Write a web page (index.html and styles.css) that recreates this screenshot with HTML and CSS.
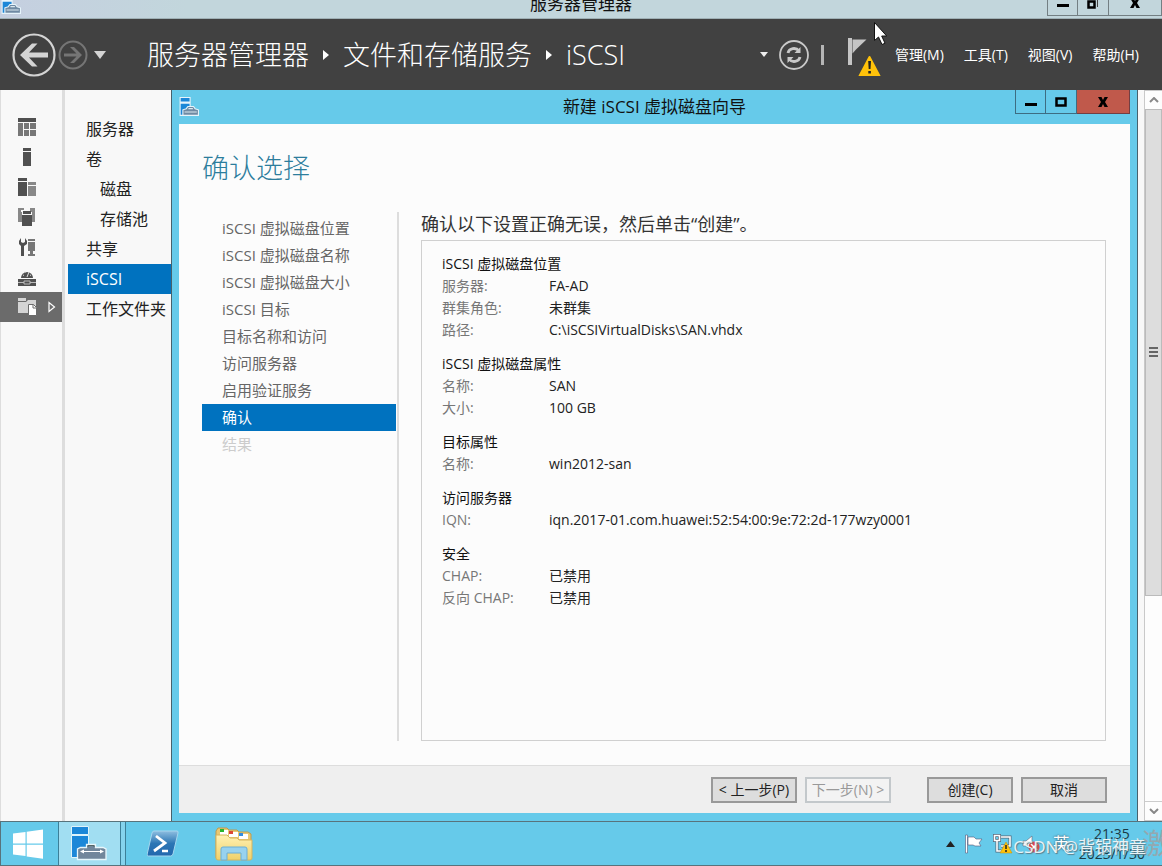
FILE: index.html
```html
<!DOCTYPE html>
<html lang="zh-CN">
<head>
<meta charset="utf-8">
<meta name="viewport" content="width=device-width, initial-scale=1">
<title>服务器管理器</title>
<link rel="stylesheet" href="styles.css">
</head>
<body>
<svg class="defs" aria-hidden="true">
  <symbol id="server-app" viewBox="0 0 18 18">
    <path d="M1 .5h9v4H1z M1 5.500h9v11H1z" fill="#1c87d8" stroke="#e6f4fb"/>
    <path d="M3.500 16.500v-5l3-1 1.500-2h5l1.500 2 3 1v5z" fill="#6f8aa3" stroke="#e6f4fb"/>
    <path d="M8.500 10.500h4M5 13.500h11" stroke="#dbe8f0" fill="none"/>
  </symbol>
</svg>

<header class="titlebar">
  <svg class="app-icon titlebar-icon" aria-hidden="true"><use href="#server-app"/></svg>
  <span class="titlebar-text">服务器管理器</span>
  <div class="window-buttons main-buttons">
    <button aria-label="最小化"><svg width="12" height="12" viewBox="0 0 12 12"><path d="M0 4h12v3H0z"/></svg></button>
    <button aria-label="还原"><svg width="12" height="12" viewBox="0 0 12 12"><path d="M1.500 1.500h6v6h-6z" fill="none" stroke="#000" stroke-width="2.500"/><path d="M10.500 0v7" fill="none" stroke="#444"/></svg></button>
    <button class="wide" aria-label="关闭"><svg width="12" height="12" viewBox="0 0 12 12"><path d="M1-2h3.500L6 1l1.500-3H11L8 3l3 5H7.500L6 5 4.500 8H1l3-5z"/></svg></button>
  </div>
</header>

<div class="ribbon">
  <button class="icon-button" aria-label="后退"><svg width="44" height="44" viewBox="0 0 44 44"><circle cx="22" cy="22" r="20.500" fill="none" stroke="#d4d4d4" stroke-width="2.200"/><path d="M8 22L20 10.500h5.500L17 19.500h19v5H17l8.500 9H20z" fill="#d4d4d4"/></svg></button>
  <button class="icon-button" aria-label="前进" ><svg width="30" height="30" viewBox="0 0 30 30"><circle cx="15" cy="15" r="13.500" fill="none" stroke="#757575" stroke-width="2"/><path d="M24 15l-8 8h-4l6.500-6.500H6v-3h12.500L12 7h4z" fill="#757575"/></svg></button>
  <button class="icon-button history" aria-label="历史记录"><svg width="12" height="8" viewBox="0 0 12 8"><path d="M0 0h12L6 8z" fill="#d4d4d4"/></svg></button>
  <nav class="breadcrumb" aria-label="路径">
    <a href="#">服务器管理器</a>
    <svg width="6" height="10" viewBox="0 0 6 10" aria-hidden="true"><path d="M0 0l6 5-6 5z" fill="#fff"/></svg>
    <a href="#">文件和存储服务</a>
    <svg width="6" height="10" viewBox="0 0 6 10" aria-hidden="true"><path d="M0 0l6 5-6 5z" fill="#fff"/></svg>
    <a href="#">iSCSI</a>
  </nav>
  <div class="ribbon-tools">
    <button class="icon-button" aria-label="展开"><svg width="8" height="5" viewBox="0 0 8 5"><path d="M0 0h8L4 5z" fill="#eee"/></svg></button>
    <button class="icon-button refresh" aria-label="刷新"><svg width="32" height="32" viewBox="0 0 32 32" fill="none" stroke="#c9c9c9"><circle cx="16" cy="16" r="14" stroke-width="1.800"/><path d="M10 14c1-5 8-6 11-2M22 18c-1 5-8 6-11 2" stroke-width="2.800"/><path d="M22.500 8v6h-6zM9.500 24v-6h6z" fill="#c9c9c9" stroke="none"/></svg></button>
    <span class="divider"></span>
    <button class="icon-button flag" aria-label="通知"><svg width="36" height="42" viewBox="0 0 36 42"><path d="M1 4h4v27H1z" fill="#c5c5c5"/><path d="M5.500 5.500h14L9 15.500l-3.500 4z" fill="#c5c5c5"/><path d="M22.500 23L32.500 42h-20z" fill="#ffc20a" stroke="#ffc20a" stroke-width="2" stroke-linejoin="round"/><path d="M21.200 27h2.800l-.5 8h-1.800zM21.300 37h2.600v2.600h-2.600z" fill="#222"/></svg></button>
    <div class="menus">
      <button>管理(M)</button><button>工具(T)</button><button>视图(V)</button><button>帮助(H)</button>
    </div>
  </div>
  <svg class="cursor" width="15" height="25" viewBox="0 0 15 25" aria-hidden="true"><path d="M1.500 1.500v18l4-3.500 3.500 7.500 3-1.300-3.300-7.200h5z" fill="#fff" stroke="#111"/></svg>
</div>

<main class="workspace">
  <nav class="rail" aria-label="角色">
    <a href="#" aria-label="仪表板"><svg width="18" height="18" viewBox="0 0 18 18"><path d="M0 0h18v4H0z" fill="#505050"/><path d="M0 5h5v13H0zM6 5h5v6H6zM12 5h6v6h-6zM6 12h5v6H6zM12 12h6v6h-6z" fill="#777"/></svg></a>
    <a href="#" aria-label="本地服务器"><svg width="18" height="18" viewBox="0 0 18 18"><path d="M5 0h8v3H5zM5 4h8v14H5z" fill="#505050"/></svg></a>
    <a href="#" aria-label="所有服务器"><svg width="18" height="18" viewBox="0 0 18 18"><path d="M0 0h9v3H0zM0 4h9v14H0z" fill="#505050"/><path d="M10 4h8v3h-8zM10 8h8v10h-8z" fill="#888"/></svg></a>
    <a href="#" aria-label="服务器组"><svg width="18" height="18" viewBox="0 0 18 18"><path d="M0 0h6v2H3v2h1v10H0zM12 0h5v14h-3V4h-2z" fill="#888"/><path d="M5 3h8v3H5zM4 7h10v11H4z" fill="#505050"/></svg></a>
    <a href="#" aria-label="配置"><svg width="18" height="18" viewBox="0 0 18 18"><path d="M3 0v4l2 1 2-1V0l2 3v3L6 8v10H3V8L1 6V3z" fill="#505050"/><path d="M10 1h7v2h-7zM10 4h7v9h-7zM12 13h3v3h2v2h-7v-2h2z" fill="#777"/></svg></a>
    <a href="#" aria-label="存储"><svg width="18" height="18" viewBox="0 0 18 18"><path d="M3 10a6 6 0 1 1 12 0z" fill="#505050"/><path d="M5 7l1 .5M7 3.500l.7 1M11 4L9 9M13 7l-1 .5" stroke="#ddd"/><path d="M0 11h18v7H0z" fill="#505050"/><path d="M0 14.500h6M12 14.500h6M6 13h6v3H6z" stroke="#bbb" fill="none"/></svg></a>
    <a href="#" class="active" aria-label="文件和存储服务"><svg width="20" height="18" viewBox="0 0 20 18"><path d="M0 0h8v3H0zM0 4h8l2-2h8v13H0z" fill="#d4d4d4"/><path d="M10.500 6.500h5l3 3v8h-8z" fill="#fff" stroke="#6b6b6b"/><path d="M15 6.500v3.500h3.500" fill="none" stroke="#6b6b6b"/></svg><svg class="expand" width="8" height="12" viewBox="0 0 8 12"><path d="M1 1.500v9L6.500 6z" fill="none" stroke="#fff" stroke-width="1.200"/></svg></a>
  </nav>
  <nav class="sections" aria-label="文件和存储服务">
    <a href="#">服务器</a><a href="#">卷</a><a href="#" class="sub">磁盘</a><a href="#" class="sub">存储池</a><a href="#">共享</a><a href="#" class="active">iSCSI</a><a href="#">工作文件夹</a>
  </nav>

  <section class="dialog" role="dialog" aria-labelledby="dialog-title">
    <div class="dialog-bar">
      <svg class="app-icon" aria-hidden="true"><use href="#server-app"/></svg>
      <h1 id="dialog-title">新建 iSCSI 虚拟磁盘向导</h1>
      <div class="window-buttons dialog-buttons">
        <button aria-label="最小化"><svg width="12" height="12" viewBox="0 0 12 12"><path d="M0 7h12v3H0z"/></svg></button>
        <button aria-label="最大化"><svg width="12" height="12" viewBox="0 0 12 12"><path d="M1.500 2.500h9v7h-9z" fill="none" stroke="#000" stroke-width="2.500"/></svg></button>
        <button class="wide close" aria-label="关闭"><svg width="12" height="12" viewBox="0 0 12 12"><path d="M1 1h3.500L6 4l1.500-3H11L8 6l3 5H7.500L6 8l-1.500 3H1l3-5z"/></svg></button>
      </div>
    </div>
    <div class="dialog-body">
      <h2>确认选择</h2>
      <div class="wizard">
        <ol class="steps">
          <li>iSCSI 虚拟磁盘位置</li><li>iSCSI 虚拟磁盘名称</li><li>iSCSI 虚拟磁盘大小</li><li>iSCSI 目标</li><li>目标名称和访问</li><li>访问服务器</li><li>启用验证服务</li><li class="current" aria-current="step">确认</li><li class="disabled">结果</li>
        </ol>
        <div class="confirm">
          <p class="intro">确认以下设置正确无误，然后单击“创建”。</p>
          <div class="summary">
            <section><h3>iSCSI 虚拟磁盘位置</h3><dl><dt>服务器:</dt><dd>FA-AD</dd><dt>群集角色:</dt><dd>未群集</dd><dt>路径:</dt><dd>C:\iSCSIVirtualDisks\SAN.vhdx</dd></dl></section>
            <section><h3>iSCSI 虚拟磁盘属性</h3><dl><dt>名称:</dt><dd>SAN</dd><dt>大小:</dt><dd>100 GB</dd></dl></section>
            <section><h3>目标属性</h3><dl><dt>名称:</dt><dd>win2012-san</dd></dl></section>
            <section><h3>访问服务器</h3><dl><dt>IQN:</dt><dd>iqn.2017-01.com.huawei:52:54:00:9e:72:2d-177wzy0001</dd></dl></section>
            <section><h3>安全</h3><dl><dt>CHAP:</dt><dd>已禁用</dd><dt>反向 CHAP:</dt><dd>已禁用</dd></dl></section>
          </div>
        </div>
      </div>
    </div>
    <footer class="dialog-footer">
      <div class="button-pair"><button>&lt; 上一步(P)</button><button disabled>下一步(N) &gt;</button></div>
      <div class="button-pair"><button>创建(C)</button><button>取消</button></div>
    </footer>
  </section>

  <div class="scrollbar" aria-hidden="true">
    <div class="scroll-arrow"><svg width="10" height="6" viewBox="0 0 10 6"><path d="M1 5l4-4 4 4" fill="none" stroke="#888" stroke-width="2"/></svg></div>
    <div class="scroll-thumb"><svg width="9" height="10" viewBox="0 0 9 10"><path d="M0 1h9M0 5h9M0 9h9" stroke="#666" stroke-width="2"/></svg></div>
    <div class="scroll-track"></div>
    <div class="scroll-arrow"><svg width="10" height="6" viewBox="0 0 10 6"><path d="M1 1l4 4 4-4" fill="none" stroke="#888" stroke-width="2"/></svg></div>
  </div>
</main>

<footer class="taskbar">
  <button class="start" aria-label="开始"><svg width="32" height="30" viewBox="0 0 32 30"><path d="M1 4.500L13.500 3v11.500H1zM14.700 2.800L31 .5v14H14.700zM1 15.700h12.500V27L1 25.500zM14.700 15.700H31v14l-16.300-2.300z" fill="#fff"/></svg></button>
  <button class="task running" aria-label="服务器管理器"><svg width="38" height="37" viewBox="0 0 38 37"><path d="M1.500 1.500h17v8h-17zM1.500 10.500h17v22h-17z" fill="#1c87d8" stroke="#dff3fb"/><path d="M7.500 34.500V24l3-1.500h6v-3h9v3h7.500l3 1.500v10.500z" fill="#71869b" stroke="#e8f6fb" stroke-width="1.300"/><path d="M18 22v-1.500h6V22" fill="none" stroke="#566"/><path d="M11 26.500h22" fill="none" stroke="#fff"/><path d="M10 26.500l4-2v4zM34 26.500l-4-2v4z" fill="#fff"/></svg></button>
  <button class="task" aria-label="PowerShell"><svg width="32" height="27" viewBox="0 0 32 27"><defs><linearGradient id="ps" x2="0" y2="1"><stop stop-color="#8ebee0"/><stop offset=".5" stop-color="#2c76b4"/><stop offset="1" stop-color="#2268ae"/></linearGradient></defs><path d="M7 1h23q1.500 0 1 2l-5 21q-.5 2-2.500 2h-22q-2 0-1.300-2L5 3q.5-2 2-2z" fill="url(#ps)" stroke="#a6d6ee"/><path d="M9 6l9 7-11 8" fill="none" stroke="#fff" stroke-width="2.800"/><path d="M15 21h6" stroke="#fff" stroke-width="2.500"/></svg></button>
  <button class="task" aria-label="文件资源管理器"><svg width="38" height="34" viewBox="0 0 38 34"><defs><linearGradient id="fo" x2="0" y2="1"><stop stop-color="#fff1b3"/><stop offset="1" stop-color="#efd16a"/></linearGradient></defs><path d="M1 4l2-3h9l2 2h8l2 2h9l3 2v24H1z" fill="#e8c873" stroke="#bd9b4f"/><path d="M5 3h8v5H5zM14 5h9v5h-9zM24 7h9v5h-9z" fill="#fff"/><path d="M5 2h4v3H5z" fill="#27b62d"/><path d="M14 4h4v3h-4z" fill="#db4637"/><path d="M24 6h4v3h-4z" fill="#318de0"/><path d="M1 8h11l3 3h7l2 2h13v18q0 2-2 2H3q-2 0-2-2z" fill="url(#fo)" stroke="#d6b45e"/><path d="M6 33V22q0-2 2-2h22q2 0 2 2v11h-6v-7H12v7z" fill="#97d2ef" stroke="#6aaed5"/></svg></button>
  <div class="tray">
    <svg width="9" height="6" viewBox="0 0 9 6"><path d="M0 6l4.500-6L9 6z" fill="#222"/></svg>
    <svg width="20" height="20" viewBox="0 0 20 20"><path d="M1.500 1h2v18h-2zM4 3h6l2 2h6l-3 4 2 3h-6l-2-1H4z" fill="#fff" stroke="#557" stroke-width=".6"/></svg>
    <svg width="20" height="20" viewBox="0 0 20 20"><path d="M7 3h10v9H8" fill="none" stroke="#567" stroke-width="3"/><path d="M7 3h10v9H8" fill="none" stroke="#fff" stroke-width="1.600"/><path d="M1.500 1.500h5v5h-5zM4 7v10h4" fill="none" stroke="#567" stroke-width="3"/><path d="M1.500 1.500h5v5h-5zM4 7v10h4" fill="none" stroke="#fff" stroke-width="1.600"/><path d="M13 8l6 11H7z" fill="#ffc20a" stroke="#c68c00" stroke-width=".5"/><path d="M13 11v4M13 16v2" stroke="#222" stroke-width="1.500"/></svg>
    <svg width="20" height="20" viewBox="0 0 20 20"><path d="M1 7h3l6-5v15l-6-5H1z" fill="#fff" stroke="#667" stroke-width=".6"/><circle cx="12" cy="13" r="5.500" fill="#e14646"/><path d="M9 10l6 6M15 10l-6 6" stroke="#fff" stroke-width="1.500"/></svg>
    <span class="ime">英</span>
    <div class="clock"><time>21:35</time><time>2023/1/30</time></div>
  </div>
  <span class="activate">激</span>
  <span class="watermark">CSDN @背锅神童</span>
</footer>
</body>
</html>
```

FILE: styles.css
```css
* { box-sizing: border-box; }

body {
  margin: 0;
  min-height: 100vh;
  display: flex;
  flex-direction: column;
  overflow: hidden;
  background: #f8f8f8;
  color: #222;
  font: 14px/22px "Open Sans", "Noto Sans CJK SC", sans-serif;
}

a { color: inherit; text-decoration: none; }
button { font: inherit; color: inherit; border: 0; padding: 0; background: none; }
svg { display: block; flex: none; }
h1, h2, h3, p, ol, dl, dd { margin: 0; padding: 0; font-weight: 400; }
.defs { position: absolute; width: 0; height: 0; }
.app-icon { width: 20px; height: 20px; }

/* Main window title */
.titlebar {
  height: 19px;
  display: grid;
  grid-template-columns: 1fr auto 1fr;
  grid-template-rows: 18px;
  align-items: end;
  background: linear-gradient(90deg, #c5cfe0, #c2d6dc 16%);
  border-bottom: 1px solid #9fb0b5;
  overflow: hidden;
}
.titlebar-icon { align-self: end; margin: 0 0 3px 1px; }
.titlebar-text { font-size: 17px; line-height: 24px; padding-bottom: 2px; color: #111; }
.window-buttons { display: flex; justify-self: end; align-self: start; }
.window-buttons button {
  width: 31px;
  height: 24px;
  display: grid;
  place-items: center;
  border: 1px solid #3d6d82;
  border-top: 0;
}
.window-buttons button + button { border-left: 0; }
.window-buttons .wide { width: 53px; }
.main-buttons button { height: 16px; align-items: start; border-color: #737f83; }
.window-buttons .close { background: #c0594b; border-color: #733e42; }

/* Navigation band */
.ribbon {
  position: relative;
  height: 71px;
  display: flex;
  align-items: center;
  padding: 0 23px 0 12px;
  background: #414141;
  color: #fff;
}
.icon-button { display: grid; place-items: center; }
.ribbon > .icon-button + .icon-button { margin-left: 2px; }
.ribbon > .history { padding-left: 4px; }
.breadcrumb {
  display: flex;
  align-items: center;
  gap: 14px;
  margin-left: 41px;
  font-size: 27px;
  line-height: 40px;
  font-weight: 300;
  white-space: nowrap;
}
.ribbon-tools { display: flex; align-items: center; margin-left: auto; }
.refresh { margin-left: 10px; }
.divider { width: 3px; height: 20px; margin: 0 23px 0 11px; background: #b5b5b5; }
.menus { display: flex; gap: 20px; margin-left: 12px; white-space: nowrap; }
.cursor { position: absolute; left: 873px; top: 2px; }

/* Workspace columns */
.workspace { flex: 1; display: flex; min-height: 0; }
.rail {
  width: 62px;
  padding-top: 22px;
  border-left: 1px solid #ddd;
}
.rail a { height: 30px; display: flex; align-items: center; padding-left: 17px; }
.rail .active { margin-left: -1px; padding-left: 18px; background: #6b6b6b; }
.expand { margin-left: 10px; }
.sections {
  width: 109px;
  padding: 24px 0 0 3px;
  border-left: 3px solid #ddd;
  font-size: 16px;
  white-space: nowrap;
}
.sections a { height: 30px; display: flex; align-items: center; padding-left: 18px; }
.sections .sub { padding-left: 32px; }
.sections .active { background: #0072bf; color: #fff; }

/* Wizard dialog */
.dialog {
  flex: 1;
  display: flex;
  flex-direction: column;
  padding: 0 7px 8px;
  background: #66caea;
  border: 1px solid #47616c;
  border-width: 0 1px 0 1px;
}
.dialog-bar {
  height: 34px;
  display: grid;
  grid-template-columns: 1fr auto 1fr;
  align-items: center;
}
.dialog-bar h1 { font-size: 17px; line-height: 32px; color: #111; }
.dialog-body {
  flex: 1;
  display: flex;
  flex-direction: column;
  padding: 22px 24px 24px 23px;
  background: #fcfcfc;
}
.dialog-body h2 { font-size: 27px; line-height: 44px; color: #2c7d9c; font-weight: 300; }
.wizard { flex: 1; display: flex; margin-top: 22px; }
.steps {
  width: 197px;
  padding-top: 3px;
  list-style: none;
  border-right: 2px solid #ddd;
  font-size: 15px;
  line-height: 27px;
  color: #666;
}
.steps li { height: 27px; padding-left: 20px; }
.steps .current { background: #0072bf; color: #fff; margin-right: 1px; }
.steps .disabled { color: #ccc; }
.confirm { flex: 1; display: flex; flex-direction: column; margin-left: 22px; }
.intro { font-size: 18px; line-height: 24px; padding-bottom: 4px; color: #333; }
.summary {
  flex: 1;
  display: flex;
  flex-direction: column;
  gap: 12px;
  padding: 12px 20px;
  border: 1px solid #d0d0d0;
}
.summary h3 { font-size: 14px; color: #111; }
.summary dl { display: grid; grid-template-columns: 107px 1fr; }
.summary dt { color: #777; }
.dialog-footer {
  height: 48px;
  display: flex;
  justify-content: flex-end;
  align-items: center;
  gap: 36px;
  padding-right: 23px;
  background: #efefef;
  border-top: 1px solid #ddd;
}
.button-pair { display: flex; gap: 8px; }
.button-pair button {
  width: 86px;
  height: 26px;
  border: 2px solid #999;
  background: #ddd;
  line-height: 20px;
  white-space: nowrap;
}
.button-pair button:disabled { color: #999; border-color: #c3c8cb; background: #f3f3f3; }

/* Page scrollbar */
.scrollbar {
  width: 18px;
  margin-left: 6px;
  display: flex;
  flex-direction: column;
  border: 1px solid #c9c9c9;
  border-right: 0;
  background: #fdfdfd;
}
.scroll-arrow { height: 18px; display: grid; place-items: center; }
.scroll-thumb {
  flex: 487;
  display: grid;
  place-items: center;
  background: #ddd;
  border: 1px solid #bbb;
}
.scroll-track { flex: 206; border-bottom: 1px solid #ccc; }

/* Taskbar */
.taskbar {
  position: relative;
  height: 45px;
  display: flex;
  background: #66caea;
  border: 1px solid #58737c;
  border-width: 1px 0 1px 1px;
}
.start { width: 57px; padding-right: 3px; display: grid; place-items: center; }
.task { width: 71px; display: grid; place-items: center; }
.running {
  width: 68px;
  margin-right: 1px;
  padding-right: 6px;
  background: linear-gradient(90deg, #a1def2 61px, #3c7f98 61px 62px, #85d3ed 62px);
  border: 1px solid #3c7f98;
  border-width: 0 1px;
}
.tray { display: flex; align-items: center; gap: 9px; margin-left: auto; padding-right: 17px; }
.ime { padding-left: 2px; font-size: 17px; color: #fff; text-shadow: 0 0 2px #234; }
.clock { display: grid; justify-items: center; line-height: 20px; color: #1b3a46; }
.activate { position: absolute; right: -8px; top: 3px; font-size: 28px; line-height: 36px; color: #94a8b0; }
.watermark {
  position: absolute;
  right: 16px;
  top: 12px;
  font-size: 17px;
  line-height: 26px;
  color: #e9f3f6;
  text-shadow: 1px 1px 1px #5b7a86;
}
```
